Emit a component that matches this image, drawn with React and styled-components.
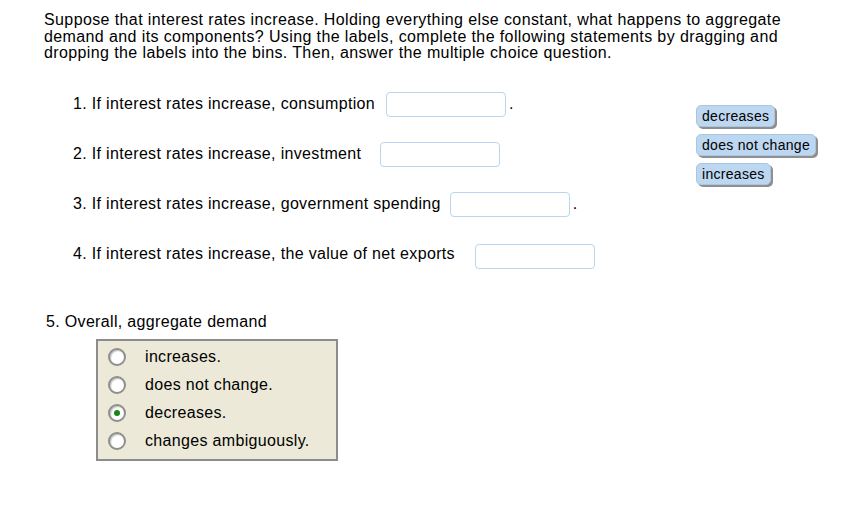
import React from 'react';
import styled, { createGlobalStyle } from 'styled-components';

const GlobalStyle = createGlobalStyle`
  body {
    margin: 0;
    background: #ffffff;
    font-family: 'Liberation Sans', Arial, sans-serif;
    color: #000;
  }
`;

const Page = styled.div`
  width: 851px;
  height: 517px;
  padding: 12px 0 0 44px;
  box-sizing: border-box;
  font-size: 16px;
  letter-spacing: 0.33px;
`;

const Intro = styled.p`
  margin: 0;
  width: 780px;
  line-height: 16.5px;
  letter-spacing: 0.39px;
`;

const Main = styled.div`
  display: flex;
  margin-top: 30px;
`;

const Statements = styled.div`
  display: flex;
  flex-direction: column;
  gap: 25px;
  padding-left: 29px;
`;

const Row = styled.div`
  display: flex;
  align-items: center;
  height: 25px;
`;

const Bin = styled.div`
  width: 118px;
  height: 23px;
  margin-left: ${(p) => p.$gap}px;
  margin-top: ${(p) => p.$drop || 0}px;
  border: 1px solid #b9d5ef;
  border-radius: 4px;
  background: #fff;
`;

const Dot = styled.span`
  margin-left: 3px;
`;

const Bank = styled.div`
  display: flex;
  flex-direction: column;
  align-items: flex-start;
  gap: 7px;
  margin-left: auto;
  margin-right: 35px;
  margin-top: 13px;
`;

const Chip = styled.div`
  font-size: 14px;
  letter-spacing: 0.3px;
  line-height: 20px;
  padding: 0 5px;
  background: #bdd7f0;
  border: 1px solid #a9c6e2;
  border-radius: 5px;
  box-shadow: 2px 2px 0 #8f8f8f;
`;

const Question = styled.div`
  margin-top: 46px;
  margin-left: 2px;
`;

const Choices = styled.div`
  width: 228px;
  margin: 8px 0 0 52px;
  padding: 6px 0 8px 10px;
  background: #ece9d8;
  border: 2px solid #8c8c8c;
  display: flex;
  flex-direction: column;
  gap: 8px;
`;

const Choice = styled.label`
  display: flex;
  align-items: center;
  gap: 19px;
  height: 20px;
`;

const Radio = styled.span`
  width: 18px;
  height: 18px;
  border-radius: 50%;
  box-sizing: border-box;
  border: 2px solid #8e8e8e;
  box-shadow: inset 1px 1px 1px #c4c4c4;
  background: radial-gradient(circle at 55% 60%, #ffffff 50%, #e2e2e2 100%);
  display: flex;
  align-items: center;
  justify-content: center;
  &::after {
    content: '';
    width: 6px;
    height: 6px;
    border-radius: 50%;
    background: ${(p) => (p.$checked ? '#138a13' : 'transparent')};
  }
`;

const rows = [
  { text: '1. If interest rates increase, consumption', gap: 11, dot: true },
  { text: '2. If interest rates increase, investment', gap: 19 },
  { text: '3. If interest rates increase, government spending', gap: 9, dot: true },
  { text: '4. If interest rates increase, the value of net exports', gap: 20, drop: 4 },
];

const labels = ['decreases', 'does not change', 'increases'];

const options = [
  { text: 'increases.' },
  { text: 'does not change.' },
  { text: 'decreases.', checked: true },
  { text: 'changes ambiguously.' },
];

export default function App() {
  return (
    <Page>
      <GlobalStyle />
      <Intro>
        Suppose that interest rates increase. Holding everything else constant, what happens to aggregate
        demand and its components? Using the labels, complete the following statements by dragging and
        dropping the labels into the bins. Then, answer the multiple choice question.
      </Intro>
      <Main>
        <Statements>
          {rows.map((r) => (
            <Row key={r.text}>
              {r.text}
              <Bin $gap={r.gap} $drop={r.drop} />
              {r.dot && <Dot>.</Dot>}
            </Row>
          ))}
        </Statements>
        <Bank>
          {labels.map((l) => (
            <Chip key={l}>{l}</Chip>
          ))}
        </Bank>
      </Main>
      <Question>5. Overall, aggregate demand</Question>
      <Choices>
        {options.map((o) => (
          <Choice key={o.text}>
            <Radio $checked={o.checked} />
            {o.text}
          </Choice>
        ))}
      </Choices>
    </Page>
  );
}
